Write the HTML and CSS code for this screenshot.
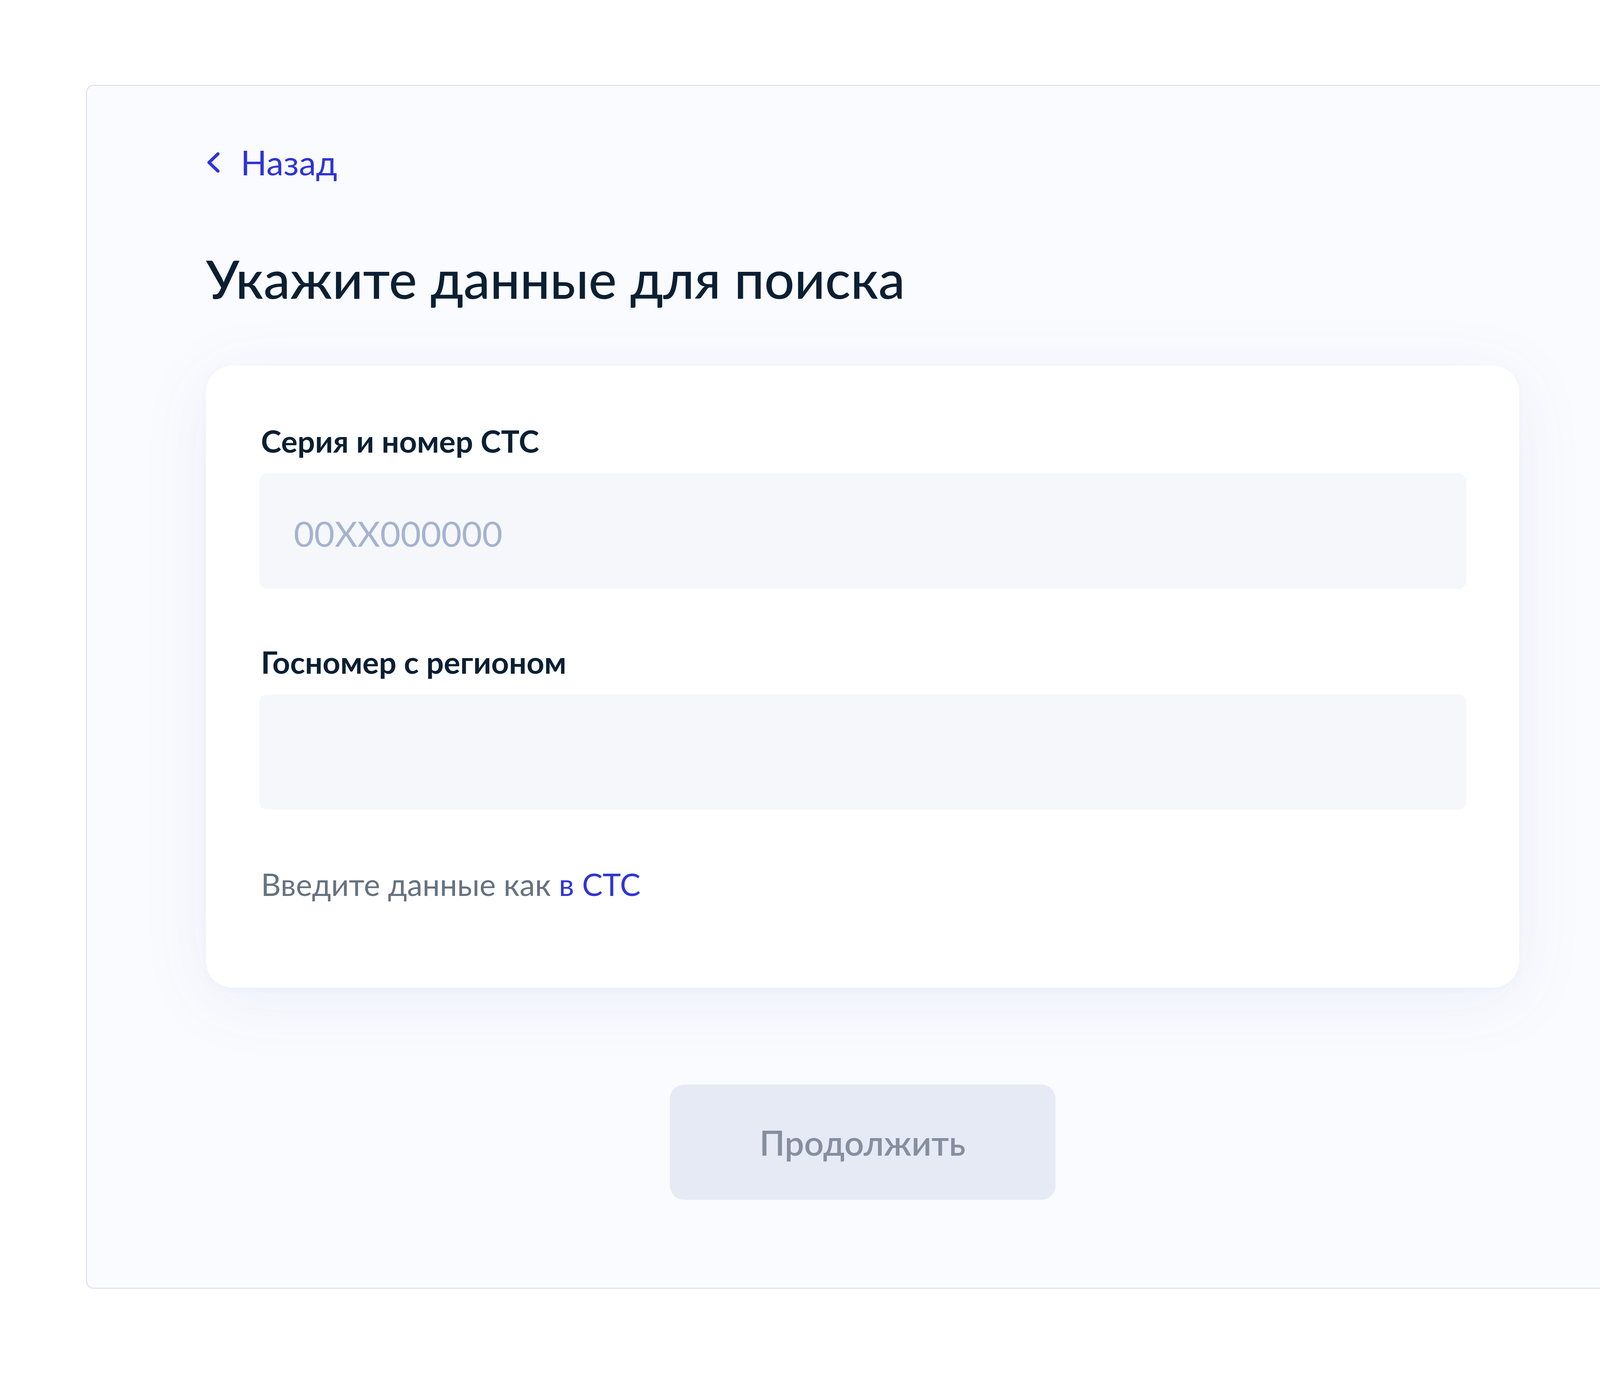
FILE: index.html
```html
<!DOCTYPE html>
<html lang="ru">
<head>
<meta charset="utf-8">
<title>Укажите данные для поиска</title>
<link rel="stylesheet" href="styles.css">
</head>
<body>
<main class="page">
  <section class="panel">
    <a class="back" href="#">
      <svg class="back-icon" viewBox="0 0 44 60" width="44" height="60" aria-hidden="true">
        <polyline points="31,8 8,30 31,52" fill="none" stroke="currentColor" stroke-width="8" stroke-linecap="round" stroke-linejoin="round"/>
      </svg>
      <span class="back-text">Назад</span>
    </a>
    <h1 class="title">Укажите данные для поиска</h1>
    <div class="card">
      <label class="label" for="sts">Серия и номер СТС</label>
      <input class="field" id="sts" type="text" placeholder="00XX000000">
      <label class="label label-second" for="plate">Госномер с регионом</label>
      <input class="field" id="plate" type="text">
      <p class="hint">Введите данные как <a class="hint-link" href="#">в СТС</a></p>
    </div>
    <div class="actions">
      <button class="btn" type="button" disabled>Продолжить</button>
    </div>
  </section>
</main>
</body>
</html>
```

FILE: styles.css
```css
html, body {
  margin: 0;
  padding: 0;
  background: #ffffff;
}

body {
  font-family: Lato, "Noto Sans", "Liberation Sans", sans-serif;
  color: #0b1f33;
}

.page {
  padding: 217px 0 0 220px;
}

.panel {
  box-sizing: border-box;
  width: 3979px;
  padding: 145px 307px 225px 304px;
  background: #fafbfe;
  border: 3px solid #e3e5eb;
  border-radius: 20px;
}

.back {
  display: flex;
  align-items: center;
  color: #2f35d4;
  text-decoration: none;
  font-size: 88px;
  line-height: 101px;
}

.back-icon {
  display: block;
}

.back-text {
  margin-left: 45px;
}

.title {
  margin: 160px 0 0;
  font-size: 136px;
  line-height: 173px;
  font-weight: 500;
  color: #0b1f33;
}

.card {
  margin-top: 137px;
  padding: 142px 135px 219px 137px;
  background: #ffffff;
  border-radius: 68px;
  box-shadow: 0 30px 180px rgba(70, 105, 210, 0.08), 0 4px 16px rgba(70, 105, 210, 0.04);
}

.label {
  display: block;
  padding-left: 4px;
  font-size: 79px;
  line-height: 101px;
  font-weight: 700;
  color: #0b1f33;
}

.label-second {
  margin-top: 137px;
}

.field {
  display: block;
  box-sizing: border-box;
  width: 100%;
  height: 295px;
  margin-top: 33px;
  padding: 10px 88px 0;
  border: none;
  border-radius: 20px;
  background: #f5f7fb;
  font-family: Lato, "Noto Sans", "Liberation Sans", sans-serif;
  font-size: 90px;
  color: #0b1f33;
  outline: none;
}

.field::placeholder {
  color: #a5b3d0;
  opacity: 1;
}

.hint {
  margin: 145px 0 0;
  padding-left: 4px;
  font-size: 79px;
  line-height: 92px;
  color: #66727f;
}

.hint-link {
  color: #2f35d4;
  text-decoration: none;
}

.actions {
  display: flex;
  justify-content: center;
  margin-top: 248px;
}

.btn {
  width: 987px;
  height: 295px;
  padding: 0;
  border: none;
  border-radius: 36px;
  background: #e6eaf5;
  color: #858fa0;
  font-family: Lato, "Noto Sans", "Liberation Sans", sans-serif;
  font-size: 88px;
  font-weight: 600;
  cursor: default;
}
```
